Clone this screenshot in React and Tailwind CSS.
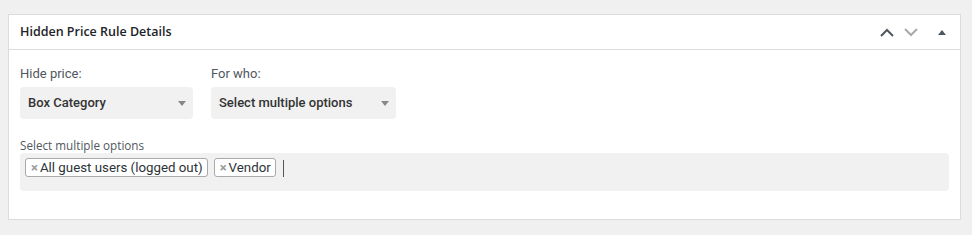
import React from 'react';

function Chevron({ up }) {
  return (
    <svg width="14" height="9" viewBox="0 0 14 9" className="block">
      <path
        d={up ? 'M1 8 L7 2 L13 8' : 'M1 1 L7 7 L13 1'}
        fill="none"
        stroke={up ? '#50575e' : '#a7aaad'}
        strokeWidth="2"
      />
    </svg>
  );
}

function SelectBox({ label, value, width }) {
  return (
    <div className="flex flex-col">
      <label className="h-[26px] text-[13px] leading-[26px] text-[#50575e] font-['Roboto',sans-serif]">{label}</label>
      <div
        className={`h-[32px] ${width} rounded-[4px] bg-[#f1f1f1] flex items-center justify-between pl-2 pr-[7px]`}
      >
        <span className="text-[13px] font-medium text-[#333] font-['Roboto',sans-serif]">{value}</span>
        <span className="w-0 h-0 border-l-[4px] border-r-[4px] border-t-[5px] border-l-transparent border-r-transparent border-t-[#888]" />
      </div>
    </div>
  );
}

function Tag({ text }) {
  return (
    <span className="h-[19px] flex items-center rounded-[3px] border border-[#aaa] bg-white pl-[5px] pr-[4px] text-[13.3px] text-[#2c3338] font-['Roboto',sans-serif]">
      <span className="mr-[2px] text-[13px] leading-none font-bold text-[#999]">×</span>
      {text}
    </span>
  );
}

export default function App() {
  return (
    <div className="min-h-[235px] bg-[#f0f0f1] pt-[14px] pl-[8px] pr-[11px] pb-[15px]">
      <div className="border border-[#dcdcde] bg-white">
        {/* header */}
        <div className="h-[35px] border-b border-[#dcdcde] flex items-center justify-between pl-[11px] pr-[14px]">
          <h2 className="text-[12.5px] font-semibold text-[#1d2327] font-['Open_Sans',sans-serif]">
            Hidden Price Rule Details
          </h2>
          <div className="flex items-center">
            <Chevron up />
            <span className="ml-[10px]"><Chevron /></span>
            <span className="ml-[20px] w-0 h-0 border-l-[4px] border-r-[4px] border-b-[5px] border-l-transparent border-r-transparent border-b-[#50575e]" />
          </div>
        </div>

        {/* body */}
        <div className="pt-[11px] pl-[11px] pr-[11px] pb-[28px]">
          <div className="flex gap-[18px]">
            <SelectBox label="Hide price:" value="Box Category" width="w-[173px]" />
            <SelectBox label="For who:" value="Select multiple options" width="w-[185px]" />
          </div>

          <div className="mt-[18px] text-[11.7px] leading-[16px] text-[#50575e] font-['Open_Sans',sans-serif]">
            Select multiple options
          </div>
          <div className="h-[38px] rounded-[4px] bg-[#f1f1f1] pl-[5px] pt-[5px] flex items-start gap-[6px]">
            <Tag text="All guest users (logged out)" />
            <Tag text="Vendor" />
            <span className="ml-[1px] mt-[2px] w-px h-[17px] bg-[#555]" />
          </div>
        </div>
      </div>
    </div>
  );
}
